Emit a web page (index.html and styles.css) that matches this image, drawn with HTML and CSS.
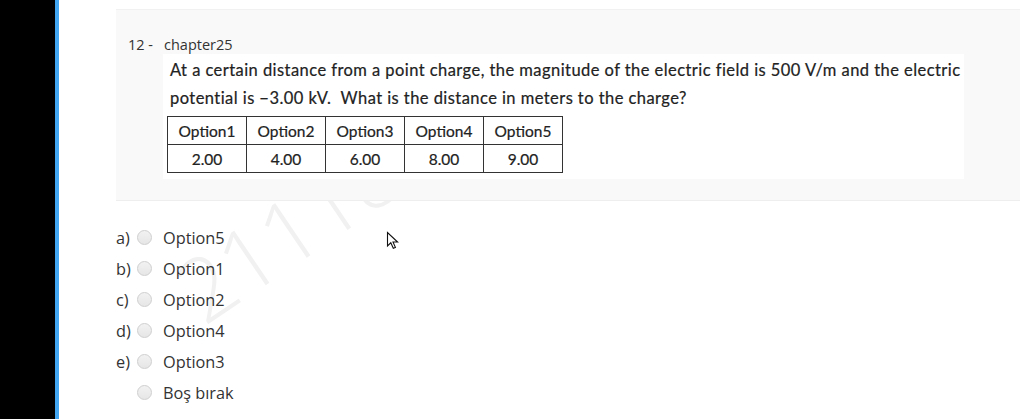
FILE: index.html
```html
<!DOCTYPE html>
<html lang="tr">
<head>
<meta charset="utf-8">
<title>Soru 12</title>
<link rel="stylesheet" href="styles.css">
</head>
<body>
<div class="sidebar"></div>
<div class="stripe"></div>
<main class="main">
  <div class="watermark">21118</div>
  <section class="panel">
    <div class="qhead"><span class="qnum">12 -</span><span class="qtitle">chapter25</span></div>
    <div class="qbody">
      <p class="qtext">At a certain distance from a point charge, the magnitude of the electric field is 500 V/m and the electric potential is &minus;3.00 kV.&nbsp; What is the distance in meters to the charge?</p>
      <table class="opts">
        <tr><td>Option1</td><td>Option2</td><td>Option3</td><td>Option4</td><td>Option5</td></tr>
        <tr><td>2.00</td><td>4.00</td><td>6.00</td><td>8.00</td><td>9.00</td></tr>
      </table>
    </div>
  </section>
  <ul class="answers">
    <li><span class="letter">a)</span><span class="radio"></span><span class="label">Option5</span></li>
    <li><span class="letter">b)</span><span class="radio"></span><span class="label">Option1</span></li>
    <li><span class="letter">c)</span><span class="radio"></span><span class="label">Option2</span></li>
    <li><span class="letter">d)</span><span class="radio"></span><span class="label">Option4</span></li>
    <li><span class="letter">e)</span><span class="radio"></span><span class="label">Option3</span></li>
    <li><span class="letter"></span><span class="radio"></span><span class="label">Boş bırak</span></li>
  </ul>
  <svg class="cursor" width="14" height="19" viewBox="0 0 14 19"><path d="M1.5 1.5 L1.5 15 L4.8 11.8 L7.3 17.3 L9.4 16.4 L7 11 L11.6 11 Z" fill="#fff" stroke="#111" stroke-width="1.1" stroke-linejoin="miter"/></svg>
</main>
</body>
</html>
```
FILE: styles.css
```css
html, body {
  margin: 0;
  padding: 0;
  height: 419px;
  overflow: hidden;
  background: #fff;
}
body {
  display: flex;
  font-family: "Open Sans", "Noto Sans", sans-serif;
  color: #333;
}
.sidebar {
  width: 55px;
  flex: none;
  background: #000;
}
.stripe {
  width: 4px;
  flex: none;
  background: #42a6f3;
}
.main {
  position: relative;
  flex: 1;
  padding-top: 9px;
}
.watermark {
  position: absolute;
  left: 141px;
  top: 250px;
  font-size: 88px;
  font-weight: 300;
  color: #f1f1f1;
  transform: rotate(-34deg);
  transform-origin: 0 80%;
  line-height: 1;
  z-index: 0;
  letter-spacing: -1px;
  white-space: nowrap;
}
.panel {
  position: relative;
  z-index: 1;
  margin-left: 57px;
  height: 192px;
  box-sizing: border-box;
  background: #f9f9f9;
  border-top: 1px solid #f1f1f1;
  border-bottom: 1px solid #eee;
  padding: 26px 0 0 12px;
}
.qhead {
  font-size: 14.5px;
  line-height: 18px;
  display: flex;
}
.qnum {
  width: 36px;
}
.qbody {
  margin-left: 35px;
  width: 801px;
  height: 125px;
  box-sizing: border-box;
  background: #fff;
  padding: 2px 0 0 4px;
  font-family: "Lato", "Open Sans", sans-serif;
}
.qtext {
  margin: 0;
  font-size: 16.5px;
  letter-spacing: 0.44px;
  line-height: 28px;
  color: #222;
  padding-left: 3px;
  -webkit-text-stroke: 0.2px #222;
}
.opts {
  border-collapse: collapse;
  margin-top: 4px;
  font-size: 15.5px;
  color: #222;
  -webkit-text-stroke: 0.2px #222;
}
.opts td {
  border: 1.5px solid #333;
  width: 78px;
  padding: 0;
  text-align: center;
  height: 27px;
}
.answers {
  position: relative;
  z-index: 1;
  list-style: none;
  margin: 21px 0 0 0;
  padding: 0 0 0 57px;
  font-size: 16.3px;
}
.answers li {
  display: flex;
  align-items: center;
  height: 31px;
}
.letter {
  width: 21px;
  color: #333;
}
.radio {
  width: 13px;
  height: 13px;
  border-radius: 50%;
  border: 1px solid #cfcfcf;
  background: linear-gradient(#f2f2f2, #e6e6e6);
  margin-right: 11px;
  flex: none;
}
.label {
  color: #333;
}
.cursor {
  position: absolute;
  left: 327px;
  top: 231px;
  z-index: 2;
}
```
